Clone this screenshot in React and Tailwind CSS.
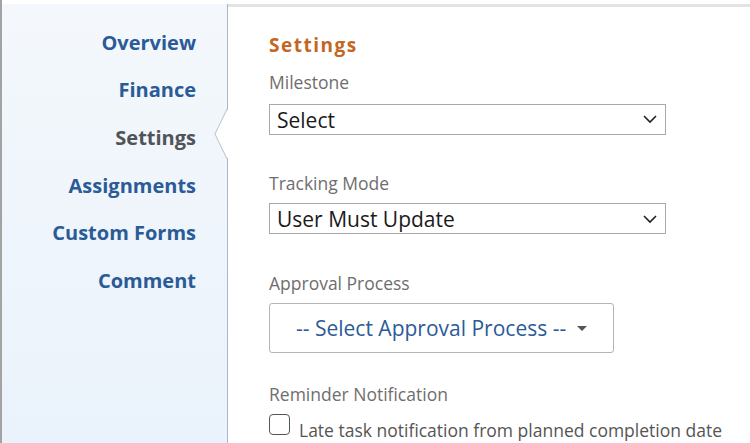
import React from 'react';

const navItems = ['Overview', 'Finance', 'Settings', 'Assignments', 'Custom Forms', 'Comment'];

const Chevron = () => (
    <svg width="16" height="10" viewBox="0 0 16 10" fill="none" className="shrink-0">
        <path d="M2 2 L8 8 L14 2" stroke="#222" strokeWidth="1.6" />
    </svg>
);

const SelectBox = ({ value }) => (
    <div className="flex h-[31px] w-[397px] items-center justify-between border border-[#a9a9a9] bg-white pl-[7px] pr-[7px] text-[21px] leading-none text-[#1a1a1a]">
        <span className="pt-[2px]">{value}</span>
        <Chevron />
    </div>
);

const Label = ({ children }) => (
    <div className="text-[17.5px] leading-none text-[#6e6e6e]">{children}</div>
);

export default function App() {
    return (
        <div className="flex h-[443px] w-[750px] overflow-hidden border-l-2 border-[#a3a3a3] bg-white pt-[4px] font-['Open_Sans',sans-serif]">
            <nav className="relative w-[226px] shrink-0 border-r border-[#a9b8c4] bg-gradient-to-b from-[#f4f8fc] to-[#eaf2fb] pt-[15px] pr-[31px]">
                {navItems.map((item) => (
                    <div
                        key={item}
                        className={`flex h-[47.6px] items-center justify-end text-[20px] font-bold ${
                            item === 'Settings' ? 'text-[#505357]' : 'text-[#2b5b97]'
                        }`}
                    >
                        {item}
                    </div>
                ))}
                <svg width="14" height="50" viewBox="0 0 14 50" className="absolute right-[-1px] top-[105px]">
                    <polygon points="14,0 1,25 14,50" fill="#ffffff" />
                    <polyline points="13,0 1,25 13,50" fill="none" stroke="#b7c3cd" strokeWidth="1" />
                </svg>
            </nav>

            <main className="flex-1 border-t-[3px] border-[#e3e3e3] pl-[41px] pt-[29px]">
                <h2 className="text-[19px] font-bold leading-none tracking-[1.5px] text-[#c4661f]">Settings</h2>

                <div className="mt-[19px]">
                    <Label>Milestone</Label>
                </div>
                <div className="mt-[12px]">
                    <SelectBox value="Select" />
                </div>

                <div className="mt-[40px]">
                    <Label>Tracking Mode</Label>
                </div>
                <div className="mt-[11px]">
                    <SelectBox value="User Must Update" />
                </div>

                <div className="mt-[41px]">
                    <Label>Approval Process</Label>
                </div>
                <div className="mt-[10px]">
                    <button className="flex h-[50px] w-[345px] items-center rounded-[3px] border border-[#b5b5b5] bg-white pl-[26px] pt-[2px] text-[21px] text-[#2b5b97]">
                        <span>-- Select Approval Process --</span>
                        <svg width="10" height="6" viewBox="0 0 10 6" className="ml-[11px]">
                            <polygon points="0,0 10,0 5,5" fill="#555" />
                        </svg>
                    </button>
                </div>

                <div className="mt-[33px]">
                    <Label>Reminder Notification</Label>
                </div>
                <label className="mt-[11px] flex items-start gap-[9px] text-[17.5px] leading-none text-[#555]">
                    <span className="h-[21px] w-[21px] shrink-0 rounded-[4px] border-[1.5px] border-[#555] bg-white" />
                    <span className="mt-[8px] whitespace-nowrap">Late task notification from planned completion date</span>
                </label>
                <div className="mt-[6px] h-[21px] w-[21px] rounded-[4px] border-[1.5px] border-[#555] bg-white" />
            </main>
        </div>
    );
}
